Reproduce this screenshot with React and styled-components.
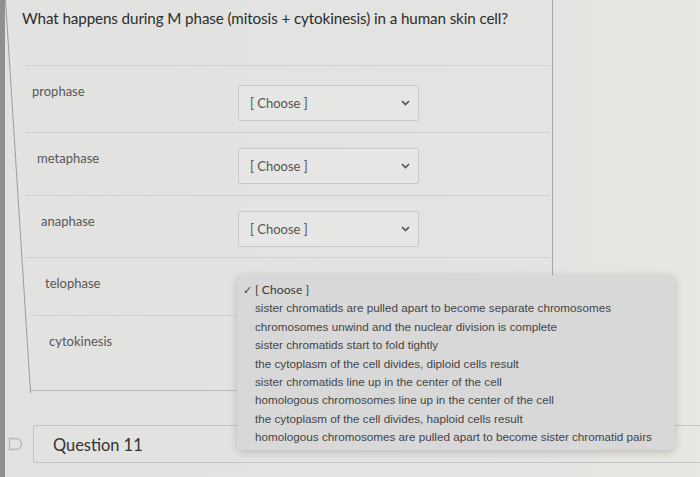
import React from 'react'
import styled, {createGlobalStyle} from 'styled-components'

const GlobalStyle = createGlobalStyle`
  html, body {
    margin: 0;
    padding: 0;
  }
  body {
    font-family: Lato, 'Noto Sans', sans-serif;
    background: #e4e4e2;
  }
`

const Page = styled.div`
  position: relative;
  width: 700px;
  height: 477px;
  overflow: hidden;
  border-left: 5px solid #8f8f8d;
  box-sizing: border-box;
  background: linear-gradient(90deg, #e2e2e0 0%, #e3e3e1 78%, #e9e7e2 100%);
  display: flex;
  flex-direction: column;
`

const Sheet = styled.div`
  position: relative;
  width: 548px;
  height: 392px;
  border-right: 1px solid #a6a6a4;
  box-sizing: border-box;

  &::before {
    content: '';
    position: absolute;
    left: 0;
    top: 0;
    width: 1px;
    height: 394px;
    background: #9c9c9a;
    transform-origin: top left;
    transform: rotate(-3.65deg);
  }
`

const Title = styled.div`
  padding: 9px 0 0 17px;
  height: 65px;
  box-sizing: border-box;
  font-size: 15.2px;
  color: #2c2c2c;
  letter-spacing: -0.1px;
`

const Body = styled.div`
  margin: 0 2px 0 20px;
`

const Row = styled.div`
  display: grid;
  grid-template-columns: 213px 181px;
  height: ${(p) => p.h}px;
  box-sizing: border-box;
  border-top: 1px solid #d2d2d0;
  border-bottom: ${(p) => (p.last ? '1px solid #b9b9b7' : 'none')};
  margin-left: ${(p) => (p.last ? 5 : 0)}px;
`

const Label = styled.div`
  padding: 17px 0 0 ${(p) => p.indent}px;
  font-size: 13px;
  line-height: 16px;
  color: #575757;
`

const Select = styled.div`
  margin-top: ${(p) => p.top}px;
  height: 36px;
  border: 1px solid #c9c9c7;
  border-radius: 2px;
  background: #e6e6e4;
  box-sizing: border-box;
  display: flex;
  align-items: center;
  justify-content: space-between;
  padding: 0 8px 0 11px;
  font-size: 13px;
  color: #555;
  visibility: ${(p) => (p.covered ? 'hidden' : 'visible')};
`

const Chevron = () => (
  <svg width="9" height="6" viewBox="0 0 9 6">
    <polyline points="1,1 4.5,4.6 8,1" fill="none" stroke="#555" strokeWidth="1.7" />
  </svg>
)

const QuestionRow = styled.div`
  display: flex;
  align-items: center;
  margin-top: 33px;
`

const FlagIcon = styled.svg`
  margin-left: 3px;
  width: 15px;
  height: 14px;
`

const QuestionBox = styled.div`
  margin-left: 10px;
  flex: 1;
  height: 38px;
  border: 1px solid #c6c6c4;
  border-right: none;
  box-sizing: border-box;
  display: flex;
  align-items: center;
  padding-left: 19px;
  font-size: 16.4px;
  color: #333;
`

const Dropdown = styled.div`
  position: absolute;
  left: 232px;
  top: 275px;
  width: 438px;
  height: 175px;
  box-sizing: border-box;
  padding: 6px 0 0 0;
  background: #d8d8d9;
  border-radius: 5px;
  box-shadow: 0 2px 8px rgba(0, 0, 0, 0.18);
  font-family: 'Liberation Sans', Arial, sans-serif;
`

const Option = styled.div`
  position: relative;
  height: 18.4px;
  line-height: 18.4px;
  padding-left: 18px;
  font-size: ${(p) => (p.selected ? 12.2 : 11.7)}px;
  color: ${(p) => (p.selected ? '#3a3a3a' : '#454545')};
  white-space: nowrap;
  font-family: ${(p) => (p.selected ? "Lato, 'Noto Sans', sans-serif" : 'inherit')};
`

const Check = styled.span`
  position: absolute;
  left: 6px;
  top: 0;
  font-size: 11px;
  color: #444;
`

const rows = [
  {label: 'prophase', h: 67, indent: 7, top: 19},
  {label: 'metaphase', h: 63, indent: 12, top: 15},
  {label: 'anaphase', h: 62, indent: 16, top: 15},
  {label: 'telophase', h: 58, indent: 20, top: 15, covered: true},
  {label: 'cytokinesis', h: 76, indent: 19, top: 17, covered: true, last: true}
]

const options = [
  'sister chromatids are pulled apart to become separate chromosomes',
  'chromosomes unwind and the nuclear division is complete',
  'sister chromatids start to fold tightly',
  'the cytoplasm of the cell divides, diploid cells result',
  'sister chromatids line up in the center of the cell',
  'homologous chromosomes line up in the center of the cell',
  'the cytoplasm of the cell divides, haploid cells result',
  'homologous chromosomes are pulled apart to become sister chromatid pairs'
]

const App = () => {
  return (
    <>
      <GlobalStyle />
      <Page>
        <Sheet>
          <Title>What happens during M phase (mitosis + cytokinesis) in a human skin cell?</Title>
          <Body>
            {rows.map((row) => (
              <Row key={row.label} h={row.h} last={row.last}>
                <Label indent={row.indent}>{row.label}</Label>
                <Select top={row.top} covered={row.covered}>
                  <span>[ Choose ]</span>
                  <Chevron />
                </Select>
              </Row>
            ))}
          </Body>
        </Sheet>
        <QuestionRow>
          <FlagIcon viewBox="0 0 15 14">
            <path d="M1.5 1.5 H8 A5.5 5.5 0 0 1 8 12.5 H1.5 Z" fill="none" stroke="#b9b9bd" strokeWidth="1.4" />
          </FlagIcon>
          <QuestionBox>Question 11</QuestionBox>
        </QuestionRow>
        <Dropdown>
          <Option selected>
            <Check>✓</Check>[ Choose ]
          </Option>
          {options.map((text) => (
            <Option key={text}>{text}</Option>
          ))}
        </Dropdown>
      </Page>
    </>
  )
}

export default App
